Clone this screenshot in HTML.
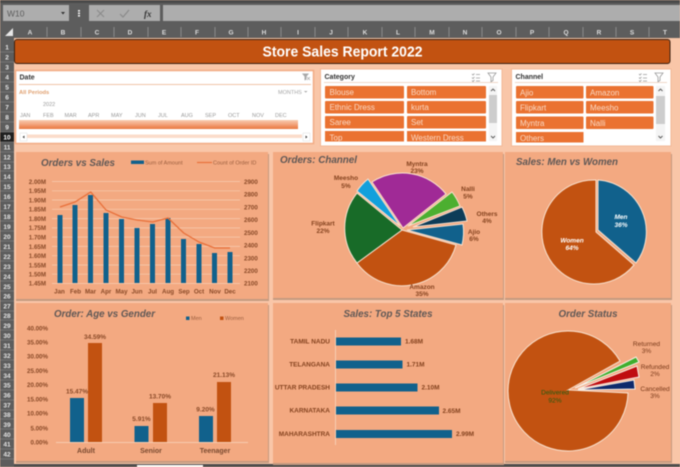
<!DOCTYPE html>
<html><head><meta charset="utf-8"><style>
html,body{margin:0;padding:0;width:680px;height:467px;overflow:hidden;background:#f9c6a8}
svg{display:block;filter:blur(.5px)}
text{font-family:"Liberation Sans",sans-serif}
.hd{font-size:6.5px;fill:#dedede;font-weight:bold;text-anchor:middle}
.rw{font-size:6.5px;fill:#e4e4e4;font-weight:bold;text-anchor:middle}
.tt{font-size:10.2px;font-weight:bold;font-style:italic;fill:#5f5856}
.sl{font-size:7px;font-weight:bold;fill:#333}
.bt{font-size:8px;fill:#f9d9c4}
.mo{font-size:5.5px;fill:#9a9a9a}
.ax{font-size:6.2px;font-weight:bold;fill:#8a4a28}
.pl{font-size:6.5px;font-weight:bold;fill:#85431f;text-anchor:middle}
.lg{font-size:5.5px;fill:#9c5f3f}
.e{text-anchor:end}.m{text-anchor:middle}
</style></head><body>
<svg width="680" height="467" viewBox="0 0 680 467" xmlns="http://www.w3.org/2000/svg">
<rect width="680" height="467" fill="#f9c6a8"/>
<!-- toolbar -->
<rect width="680" height="38" fill="#5d5d5d"/>
<rect width="680" height="3" fill="#4a4a4a"/>
<rect x="3" y="5" width="66" height="16" fill="#adadad"/>
<text x="7" y="16.5" font-size="8.5" fill="#5c5c5c">W10</text>
<path d="M61 12h4l-2 2.5z" fill="#333"/>
<path d="M79 10v1.6M79 12.5v1.6M79 15v1.6" stroke="#eee" stroke-width="2"/>
<rect x="89" y="5" width="71" height="16" fill="#adadad"/>
<path d="M97 10l7 7M104 10l-7 7" stroke="#8a8a8a" stroke-width="1"/>
<path d="M120 14l3 3 6-7" stroke="#8a8a8a" stroke-width="1.2" fill="none"/>
<text x="144" y="17" font-size="9" font-style="italic" fill="#333" style="font-family:'Liberation Serif',serif;font-weight:bold">fx</text>
<rect x="163" y="5" width="517" height="16" fill="#adadad"/>
<path d="M5 36h8v-8z" fill="#e8e8e8"/>
<g stroke="#8a8a8a" stroke-width="1"><path d="M47 27v10M81 27v10M114 27v10M148 27v10M181 27v10M215 27v10M248 27v10M281 27v10M315 27v10M348 27v10M382 27v10M415 27v10M449 27v10M482 27v10M516 27v10M549 27v10M583 27v10M616 27v10M649 27v10"/></g>
<g class="hd"><text class="hd" x="30" y="34.500">A</text><text class="hd" x="63" y="34.500">B</text><text class="hd" x="97" y="34.500">C</text><text class="hd" x="130" y="34.500">D</text><text class="hd" x="164" y="34.500">E</text><text class="hd" x="197" y="34.500">F</text><text class="hd" x="231" y="34.500">G</text><text class="hd" x="264" y="34.500">H</text><text class="hd" x="298" y="34.500">I</text><text class="hd" x="331" y="34.500">J</text><text class="hd" x="365" y="34.500">K</text><text class="hd" x="398" y="34.500">L</text><text class="hd" x="432" y="34.500">M</text><text class="hd" x="465" y="34.500">N</text><text class="hd" x="499" y="34.500">O</text><text class="hd" x="532" y="34.500">P</text><text class="hd" x="566" y="34.500">Q</text><text class="hd" x="599" y="34.500">R</text><text class="hd" x="632" y="34.500">S</text><text class="hd" x="665" y="34.500">T</text></g>
<!-- row header -->
<rect x="0" y="38" width="14" height="429" fill="#5d5d5d"/>
<rect x="0" y="132" width="14" height="10" fill="#1f1f1f"/>
<g stroke="#8c8c8c" stroke-width=".6"><path d="M0 52h14M0 62h14M0 72h14M0 82h14M0 92h14M0 102h14M0 112h14M0 122h14M0 132h14M0 142h14M0 152h14M0 162h14M0 171h14M0 181h14M0 191h14M0 201h14M0 211h14M0 221h14M0 231h14M0 241h14M0 251h14M0 261h14M0 271h14M0 281h14M0 291h14M0 301h14M0 311h14M0 320h14M0 330h14M0 340h14M0 350h14M0 360h14M0 370h14M0 380h14M0 390h14M0 400h14M0 410h14M0 419h14M0 429h14M0 439h14M0 449h14M0 459h14"/></g>
<text class="rw" x="7" y="49.500">1</text><text class="rw" x="7" y="59.500">2</text><text class="rw" x="7" y="69.500">3</text><text class="rw" x="7" y="79.500">4</text><text class="rw" x="7" y="89.500">5</text><text class="rw" x="7" y="99.500">6</text><text class="rw" x="7" y="109.500">7</text><text class="rw" x="7" y="119.500">8</text><text class="rw" x="7" y="129.500">9</text><text class="rw" x="7" y="139.500" style="fill:#fff">10</text><text class="rw" x="7" y="149.500">11</text><text class="rw" x="7" y="159.500">12</text><text class="rw" x="7" y="169">13</text><text class="rw" x="7" y="179">14</text><text class="rw" x="7" y="189">15</text><text class="rw" x="7" y="199">16</text><text class="rw" x="7" y="209">17</text><text class="rw" x="7" y="219">18</text><text class="rw" x="7" y="229">19</text><text class="rw" x="7" y="239">20</text><text class="rw" x="7" y="249">21</text><text class="rw" x="7" y="259">22</text><text class="rw" x="7" y="269">23</text><text class="rw" x="7" y="279">24</text><text class="rw" x="7" y="289">25</text><text class="rw" x="7" y="298.500">26</text><text class="rw" x="7" y="308.500">27</text><text class="rw" x="7" y="318">28</text><text class="rw" x="7" y="328">29</text><text class="rw" x="7" y="338">30</text><text class="rw" x="7" y="348">31</text><text class="rw" x="7" y="358">32</text><text class="rw" x="7" y="368">33</text><text class="rw" x="7" y="378">34</text><text class="rw" x="7" y="387.500">35</text><text class="rw" x="7" y="397.500">36</text><text class="rw" x="7" y="407.500">37</text><text class="rw" x="7" y="417">38</text><text class="rw" x="7" y="427">39</text><text class="rw" x="7" y="437">40</text><text class="rw" x="7" y="446.500">41</text><text class="rw" x="7" y="456.500">42</text>
<!-- bottom bar -->
<rect x="14" y="464" width="666" height="3" fill="#4d4d4d"/>
<rect x="137" y="465" width="66" height="2" fill="#fff"/>
<!-- title -->
<rect x="14.500" y="39.500" width="655.500" height="24" rx="2.500" fill="#c25211" stroke="#3a2010" stroke-width="1"/>
<text x="342.500" y="56.500" font-size="14.500" font-weight="bold" fill="#fff" text-anchor="middle" textLength="160" lengthAdjust="spacingAndGlyphs">Store Sales Report 2022</text>
<!-- Date slicer -->
<rect x="15.500" y="70.500" width="298" height="73" fill="#fff" stroke="#f2ab84" stroke-width="1.500"/>
<text class="sl" x="19.500" y="79.500">Date</text>
<path d="M19 84.500h292" stroke="#f0c4a8" stroke-width="1"/>
<path d="M302 73.500h7l-2.500 3v3l-2 1v-4z" fill="#a9a9a9"/>
<path d="M307 77l3 3M310 77l-3 3" stroke="#a9a9a9" stroke-width=".7"/>
<text x="19" y="94" font-size="5.800" font-weight="bold" fill="#e0a070">All Periods</text>
<text x="278" y="94" font-size="5.500" fill="#a6a6a6">MONTHS</text>
<path d="M304 91h3.500l-1.750 1.600z" fill="#a6a6a6"/>
<text class="mo" x="43" y="106">2022</text>
<text class="mo" x="20" y="117">JAN</text><text class="mo" x="43" y="117">FEB</text><text class="mo" x="64.500" y="117">MAR</text><text class="mo" x="88" y="117">APR</text><text class="mo" x="111" y="117">MAY</text><text class="mo" x="135" y="117">JUN</text><text class="mo" x="158" y="117">JUL</text><text class="mo" x="181" y="117">AUG</text><text class="mo" x="205" y="117">SEP</text><text class="mo" x="228" y="117">OCT</text><text class="mo" x="252" y="117">NOV</text><text class="mo" x="275" y="117">DEC</text>
<defs><linearGradient id="tl" x1="0" y1="0" x2="0" y2="1"><stop offset="0" stop-color="#f8cdb2"/><stop offset=".5" stop-color="#f2a27a"/><stop offset="1" stop-color="#e8773d"/></linearGradient></defs>
<rect x="19" y="120" width="279" height="9" fill="url(#tl)"/>
<rect x="26" y="134.500" width="276" height="3.500" fill="#fbdccb"/>
<rect x="20" y="133" width="7" height="8" fill="#fff" stroke="#ddd" stroke-width=".5"/><rect x="303" y="133" width="7" height="8" fill="#fff" stroke="#ddd" stroke-width=".5"/>
<path d="M24.500 135.500l-2 1.500 2 1.500zM305.500 135.500l2 1.500-2 1.500z" fill="#444"/>
<!-- Category slicer -->
<rect x="320.500" y="69" width="181.500" height="77" fill="#fff" stroke="#f2b896" stroke-width="1"/>
<text class="sl" x="324.500" y="79">Category</text>
<path d="M324 82.500h174" stroke="#f0d8c8" stroke-width="1"/>
<g stroke="#999" stroke-width=".8" fill="none"><path d="M472 74l1 1 1.500-1.500M476 74.500h4M472 77.500l1 1 1.500-1.500M476 78h4M472 80.500l1 1 1.500-1.500M476 81h4"/><path d="M488 73h8l-3 4v3.500l-2 1.200V77z"/></g>
<g fill="#ea7231"><rect x="325" y="86" width="79" height="12.500" rx="1"/><rect x="407" y="86" width="79" height="12.500" rx="1"/><rect x="325" y="101" width="79" height="12.500" rx="1"/><rect x="407" y="101" width="79" height="12.500" rx="1"/><rect x="325" y="116" width="79" height="12.500" rx="1"/><rect x="407" y="116" width="79" height="12.500" rx="1"/><rect x="325" y="131" width="79" height="10.500"/><rect x="407" y="131" width="79" height="10.500"/></g>
<text class="bt" x="329.500" y="95">Blouse</text><text class="bt" x="411" y="95">Bottom</text><text class="bt" x="329.500" y="110">Ethnic Dress</text><text class="bt" x="411" y="110">kurta</text><text class="bt" x="329.500" y="125">Saree</text><text class="bt" x="411" y="125">Set</text><text class="bt" x="329.500" y="140.500">Top</text><text class="bt" x="411" y="140.500">Western Dress</text>
<rect x="489" y="86" width="8" height="55" fill="#f4f4f4"/><rect x="489" y="95" width="8" height="28" fill="#cdcdcd"/>
<path d="M491 91l2-2 2 2M491 136l2 2 2-2" stroke="#555" stroke-width=".9" fill="none"/>
<!-- Channel slicer -->
<rect x="511.500" y="69" width="159.500" height="77" fill="#fff" stroke="#f2b896" stroke-width="1"/>
<text class="sl" x="515.500" y="79">Channel</text>
<path d="M515 82.500h152" stroke="#f0d8c8" stroke-width="1"/>
<g stroke="#999" stroke-width=".8" fill="none"><path d="M639 74l1 1 1.500-1.500M643 74.500h4M639 77.500l1 1 1.500-1.500M643 78h4M639 80.500l1 1 1.500-1.500M643 81h4"/><path d="M655 73h8l-3 4v3.500l-2 1.200V77z"/></g>
<g fill="#ea7231"><rect x="516" y="86" width="67.500" height="12.500" rx="1"/><rect x="586" y="86" width="67.500" height="12.500" rx="1"/><rect x="516" y="101" width="67.500" height="12.500" rx="1"/><rect x="586" y="101" width="67.500" height="12.500" rx="1"/><rect x="516" y="116.500" width="67.500" height="12.500" rx="1"/><rect x="586" y="116.500" width="67.500" height="12.500" rx="1"/><rect x="516" y="132" width="67.500" height="10.500"/></g>
<text class="bt" x="520" y="95.500">Ajio</text><text class="bt" x="590" y="95.500">Amazon</text><text class="bt" x="520" y="110.500">Flipkart</text><text class="bt" x="590" y="110.500">Meesho</text><text class="bt" x="520" y="126">Myntra</text><text class="bt" x="590" y="126">Nalli</text><text class="bt" x="520" y="141">Others</text>
<rect x="656" y="86" width="9" height="55" fill="#f4f4f4"/><rect x="656" y="96" width="9" height="28" fill="#cdcdcd"/>
<path d="M658.500 91l2-2 2 2M658.500 136l2 2 2-2" stroke="#555" stroke-width=".9" fill="none"/>
<!-- panels -->
<g fill="#c49a80"><rect x="16" y="154" width="253" height="147"/><rect x="273" y="154" width="231" height="146"/><rect x="505" y="154" width="167" height="146"/><rect x="16" y="305" width="253" height="158"/><rect x="273" y="305" width="231" height="160"/><rect x="505" y="305" width="167" height="158"/></g>
<g fill="#f3a981"><rect x="16" y="152" width="252" height="147"/><rect x="273" y="152" width="230" height="146"/><rect x="505" y="152" width="166" height="146"/><rect x="16" y="303" width="252" height="158"/><rect x="273" y="303" width="230" height="160"/><rect x="505" y="303" width="166" height="158"/></g>
<!-- chart 1 -->
<text class="tt" x="41" y="166" textLength="74" lengthAdjust="spacingAndGlyphs">Orders vs Sales</text>
<rect x="131" y="160.500" width="13" height="3.500" fill="#11618c"/>
<text class="lg" x="145" y="164.500">Sum of Amount</text>
<path d="M197 162.500h15" stroke="#e8703a" stroke-width="1.200"/>
<text class="lg" x="213" y="164.500">Count of Order ID</text>
<g stroke="#f8cdb2" stroke-width=".7"><path d="M52 181.500h188M52 190.800h188M52 200h188M52 209.300h188M52 218.600h188M52 227.900h188M52 237.100h188M52 246.400h188M52 255.700h188M52 265h188M52 274.200h188M52 283.500h188"/></g>
<g fill="#11618c"><rect x="57.500" y="215" width="5" height="68"/><rect x="72.500" y="205" width="5" height="78"/><rect x="88" y="195" width="5" height="88"/><rect x="103.500" y="213" width="5" height="70"/><rect x="119" y="219" width="5" height="64"/><rect x="134.500" y="228" width="5" height="55"/><rect x="150" y="224" width="5" height="59"/><rect x="165.500" y="218" width="5" height="65"/><rect x="181" y="239" width="5" height="44"/><rect x="196.500" y="244" width="5" height="39"/><rect x="212" y="253" width="5" height="30"/><rect x="227.500" y="252" width="5" height="31"/></g>
<path d="M60 207L75 202L90.700 192L106 210L121.700 217L137 220L152.700 222L168 218L183.700 233L199 242L214.700 248L230 248" fill="none" stroke="#e8703a" stroke-width="1.300"/>
<text class="ax e" x="46" y="184">2.00M</text><text class="ax e" x="46" y="193">1.95M</text><text class="ax e" x="46" y="202.500">1.90M</text><text class="ax e" x="46" y="211.500">1.85M</text><text class="ax e" x="46" y="221">1.80M</text><text class="ax e" x="46" y="230">1.75M</text><text class="ax e" x="46" y="239.500">1.70M</text><text class="ax e" x="46" y="249">1.65M</text><text class="ax e" x="46" y="258">1.60M</text><text class="ax e" x="46" y="267.500">1.55M</text><text class="ax e" x="46" y="276.500">1.50M</text><text class="ax e" x="46" y="285.500">1.45M</text>
<text class="ax" x="244" y="184">2900</text><text class="ax" x="244" y="196.500">2800</text><text class="ax" x="244" y="209.500">2700</text><text class="ax" x="244" y="222">2600</text><text class="ax" x="244" y="235">2500</text><text class="ax" x="244" y="247.500">2400</text><text class="ax" x="244" y="260.500">2300</text><text class="ax" x="244" y="273">2200</text><text class="ax" x="244" y="285.500">2100</text>
<g class="ax"><text class="ax m" x="59.500" y="293.500">Jan</text><text class="ax m" x="75.500" y="293.500">Feb</text><text class="ax m" x="90.500" y="293.500">Mar</text><text class="ax m" x="106" y="293.500">Apr</text><text class="ax m" x="121.500" y="293.500">May</text><text class="ax m" x="137" y="293.500">Jun</text><text class="ax m" x="152.500" y="293.500">Jul</text><text class="ax m" x="168" y="293.500">Aug</text><text class="ax m" x="184" y="293.500">Sep</text><text class="ax m" x="199" y="293.500">Oct</text><text class="ax m" x="215" y="293.500">Nov</text><text class="ax m" x="230" y="293.500">Dec</text></g>
<!-- chart 2 pie -->
<text class="tt" x="280" y="163" textLength="77" lengthAdjust="spacingAndGlyphs">Orders: Channel</text>
<g stroke="#f8e2d0" stroke-width="1">
<path d="M402 230L456 245A56 56 0 0 1 357 263Z" fill="#c25211"/>
<path d="M402 230L357 263A56 56 0 0 1 357 193Z" fill="#186b28"/>
<path d="M400 226L357 191A56 56 0 0 1 368 179Z" fill="#12a0dc"/>
<path d="M403 228L372 182A56 56 0 0 1 446 194Z" fill="#a02a96"/>
<path d="M408 226L452 192A56 56 0 0 1 460 206Z" fill="#4caf30"/>
<path d="M413 227L462 207A54 54 0 0 1 467 221Z" fill="#0d3c58"/>
<path d="M407 230L463 224A56 56 0 0 1 462 245Z" fill="#11618c"/>
</g>
<g class="pl"><text class="pl" x="417" y="166">Myntra</text><text class="pl" x="417" y="173">23%</text><text class="pl" x="346" y="180">Meesho</text><text class="pl" x="346" y="188">5%</text><text class="pl" x="468" y="191">Nalli</text><text class="pl" x="468" y="198.500">5%</text><text class="pl" x="487" y="216">Others</text><text class="pl" x="487" y="223">4%</text><text class="pl" x="474" y="234">Ajio</text><text class="pl" x="474" y="241">6%</text><text class="pl" x="323" y="225.500">Flipkart</text><text class="pl" x="323" y="233">22%</text><text class="pl" x="422" y="289">Amazon</text><text class="pl" x="422" y="296">35%</text></g>
<!-- chart 3 -->
<text class="tt" x="516" y="165" textLength="102" lengthAdjust="spacingAndGlyphs">Sales: Men vs Women</text>
<path d="M596 232L634 265A52 52 0 1 1 596 180Z" fill="#c25211" stroke="#f8e2d0" stroke-width="1"/>
<path d="M598 230L598 180A52 52 0 0 1 636 263Z" fill="#11618c" stroke="#f8e2d0" stroke-width="1"/>
<g font-size="6.500" font-weight="bold" font-style="italic" fill="#fff" text-anchor="middle"><text x="621" y="219">Men</text><text x="621" y="227">36%</text><text x="572" y="242.500">Women</text><text x="572" y="250">64%</text></g>
<!-- chart 4 -->
<text class="tt" x="54" y="317" textLength="101" lengthAdjust="spacingAndGlyphs">Order: Age vs Gender</text>
<rect x="186" y="316.500" width="3.500" height="3.500" fill="#11618c"/><text class="lg" x="191" y="320">Men</text>
<rect x="220" y="316.500" width="3.500" height="3.500" fill="#c25211"/><text class="lg" x="225" y="320">Women</text>
<text class="ax e" x="48" y="330.500">40.00%</text><text class="ax e" x="48" y="344.500">35.00%</text><text class="ax e" x="48" y="358.500">30.00%</text><text class="ax e" x="48" y="373">25.00%</text><text class="ax e" x="48" y="387">20.00%</text><text class="ax e" x="48" y="401.500">15.00%</text><text class="ax e" x="48" y="415.500">10.00%</text><text class="ax e" x="48" y="430.500">5.00%</text><text class="ax e" x="48" y="444.500">0.00%</text>
<path d="M56 442.500h192" stroke="#f8d8c0" stroke-width=".8"/>
<g fill="#11618c"><rect x="70" y="398" width="14" height="44"/><rect x="134.500" y="426" width="14" height="16"/><rect x="199" y="416" width="14" height="26"/></g>
<g fill="#c25211"><rect x="88" y="343" width="14" height="99"/><rect x="153" y="403" width="14" height="39"/><rect x="217" y="382" width="14" height="60"/></g>
<g font-size="6.500" font-weight="bold" fill="#8a4a28" text-anchor="middle"><text x="77" y="393.500">15.47%</text><text x="95" y="339">34.59%</text><text x="141.500" y="421">5.91%</text><text x="160" y="398.500">13.70%</text><text x="205.500" y="411.500">9.20%</text><text x="224" y="377">21.13%</text></g>
<g font-size="7" font-weight="bold" fill="#7a4a30" text-anchor="middle"><text x="86" y="453">Adult</text><text x="151" y="453">Senior</text><text x="215" y="453">Teenager</text></g>
<!-- chart 5 -->
<text class="tt m" x="388" y="317" textLength="89" lengthAdjust="spacingAndGlyphs">Sales: Top 5 States</text>
<path d="M335.500 330v115" stroke="#f8d8c0" stroke-width=".8"/>
<g fill="#11618c"><rect x="336" y="337.500" width="65" height="8"/><rect x="336" y="360.500" width="66.500" height="8"/><rect x="336" y="383.500" width="81.500" height="8"/><rect x="336" y="406.500" width="103" height="8"/><rect x="336" y="430" width="116" height="8"/></g>
<g font-size="6.500" font-weight="bold" fill="#85431f"><g text-anchor="end"><text x="330" y="343.500">TAMIL NADU</text><text x="330" y="366.500">TELANGANA</text><text x="330" y="389.500">UTTAR PRADESH</text><text x="330" y="412.500">KARNATAKA</text><text x="330" y="436">MAHARASHTRA</text></g>
<text x="405" y="343.500">1.68M</text><text x="406.500" y="366.500">1.71M</text><text x="421.500" y="389.500">2.10M</text><text x="442.500" y="413">2.65M</text><text x="456" y="436">2.99M</text></g>
<!-- chart 6 -->
<text class="tt m" x="588" y="317" textLength="59" lengthAdjust="spacingAndGlyphs">Order Status</text>
<path d="M568 390L620 361A60 60 0 1 0 628 393Z" fill="#c25211" stroke="#f8e2d0" stroke-width="1"/>
<path d="M575 388L636 357L639 362Z" fill="#3fae2e" stroke="#f8f0e8" stroke-width="1"/>
<path d="M578 389L637 366L639 377Z" fill="#c00d10" stroke="#f8f0e8" stroke-width="1"/>
<path d="M578 390L634 380L635 389Z" fill="#0e2a6c" stroke="#f8f0e8" stroke-width="1"/>
<g font-size="6.600" fill="#1f5a10" text-anchor="middle"><text x="555" y="394.500">Delivered</text><text x="555" y="402.500">92%</text></g>
<g font-size="6.600" fill="#7a3a1a" text-anchor="middle"><text x="646.500" y="346">Returned</text><text x="646.500" y="353">3%</text><text x="655" y="369">Refunded</text><text x="655" y="376">2%</text><text x="655" y="391">Cancelled</text><text x="655" y="398">3%</text></g>
</svg>
</body></html>
